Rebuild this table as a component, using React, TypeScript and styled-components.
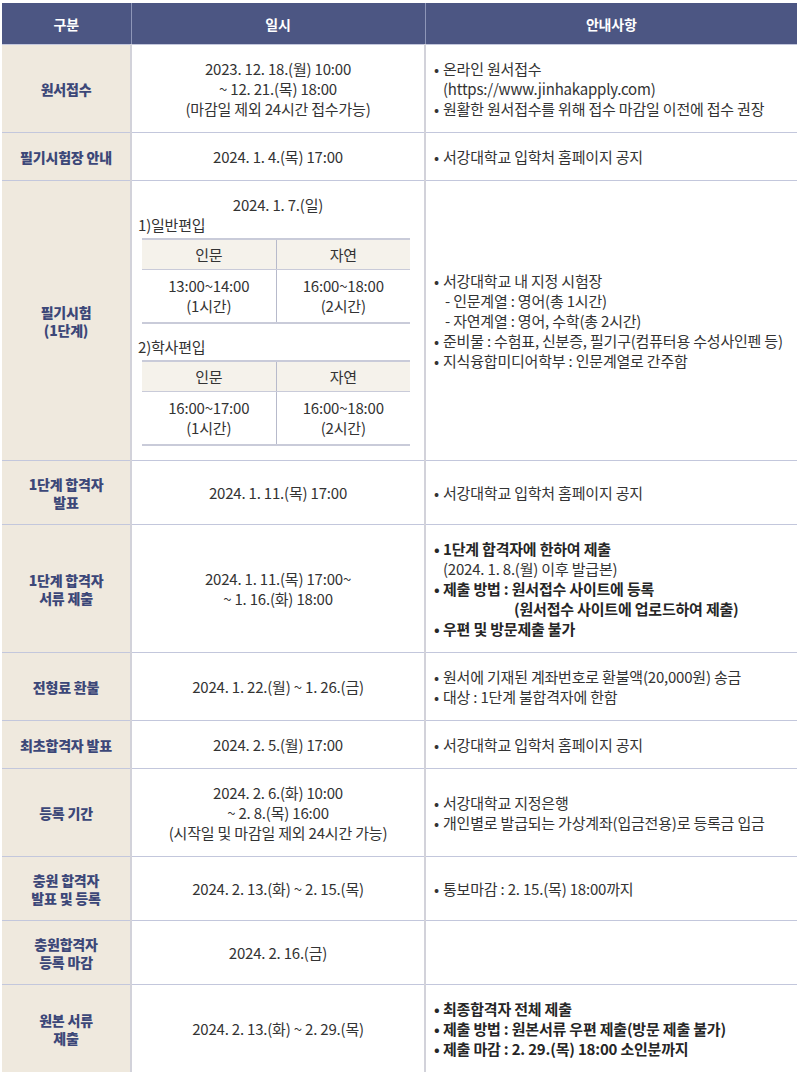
import React from 'react';
import styled, { createGlobalStyle } from 'styled-components';

const GlobalStyle = createGlobalStyle`
  body {
    margin: 3px 3px 0 2px;
    background: #fff;
    font-family: 'Noto Sans CJK KR', 'Noto Sans', sans-serif;
    color: #333;
  }
`;

const Table = styled.table`
  width: 795px;
  border-collapse: collapse;
  table-layout: fixed;
  font-size: 15px;
  line-height: 20px;
  letter-spacing: -0.2px;
  border-bottom: 2px solid #c3c7dc;
`;

const Th = styled.th`
  background: #4c5683;
  color: #fff;
  font-size: 14px;
  font-weight: 700;
  padding: 10.5px 0;
  text-align: center;
  border-left: 1px solid #8e96b8;
  &:first-child {
    border-left: none;
  }
`;

const Row = styled.tr`
  border-top: 1px solid #c3c7dc;
`;

const Label = styled.td`
  background: #efe9de;
  color: #3c4778;
  font-size: 14px;
  font-weight: 900;
  text-align: center;
  line-height: 18px;
  padding: 13.5px 4px;
  border-right: 2px solid #d2d2da;
`;

const DateCell = styled.td`
  text-align: center;
  padding: 13.5px 6px;
  border-right: 2px solid #d2d2da;
  vertical-align: middle;
`;

const NoteCell = styled.td`
  padding: 13.5px 6px 13.5px 8px;
  vertical-align: middle;
`;

const Line = styled.div<{ $bold?: boolean; $indent?: number }>`
  display: flex;
  font-weight: ${(p) => (p.$bold ? 700 : 400)};
  color: ${(p) => (p.$bold ? '#262626' : '#333')};
  padding-left: ${(p) => p.$indent ?? 0}px;
  white-space: nowrap;
`;

const Dot = styled.span`
  width: 9px;
  flex: none;
`;

const Exam = styled.div`
  padding: 0 4px 1px 0;
`;

const ExamDate = styled.div`
  text-align: center;
  padding-left: 4px;
`;

const SubTitle = styled.div<{ $gap?: number }>`
  text-align: left;
  margin-top: ${(p) => p.$gap ?? 0}px;
`;

const SubTable = styled.table`
  width: 268px;
  margin: 3px 0 0 4px;
  border-collapse: collapse;
  table-layout: fixed;
  border-top: 2px solid #c9cbd9;
  border-bottom: 2px solid #c9cbd9;
`;

const SubTh = styled.th`
  background: #f5f2eb;
  font-weight: 400;
  color: #333;
  padding: 5px 0 4px;
  border-bottom: 1px solid #c9cbd9;
  & + & {
    border-left: 1px solid #b7bacb;
  }
`;

const SubTd = styled.td`
  padding: 6px 0 6px;
  text-align: center;
  & + & {
    border-left: 1px solid #b7bacb;
  }
`;

type NoteLine = { text: string; bullet?: boolean; bold?: boolean; indent?: number };

interface RowData {
  label: string[];
  date: React.ReactNode;
  notes: NoteLine[];
}

const b = (text: string, bold = false): NoteLine => ({ text, bullet: true, bold });
const c = (text: string, indent = 9, bold = false): NoteLine => ({ text, indent, bold });

function Notes({ lines }: { lines: NoteLine[] }) {
  return (
    <>
      {lines.map((l, i) => (
        <Line key={i} $bold={l.bold} $indent={l.indent}>
          {l.bullet && <Dot>•</Dot>}
          <span>{l.text}</span>
        </Line>
      ))}
    </>
  );
}

function ExamTable({ left, right }: { left: string[]; right: string[] }) {
  return (
    <SubTable>
      <thead>
        <tr>
          <SubTh>인문</SubTh>
          <SubTh>자연</SubTh>
        </tr>
      </thead>
      <tbody>
        <tr>
          <SubTd>
            {left[0]}
            <br />
            {left[1]}
          </SubTd>
          <SubTd>
            {right[0]}
            <br />
            {right[1]}
          </SubTd>
        </tr>
      </tbody>
    </SubTable>
  );
}

const lines = (...t: string[]) =>
  t.map((s, i) => (
    <React.Fragment key={i}>
      {i > 0 && <br />}
      {s}
    </React.Fragment>
  ));

const rows: RowData[] = [
  {
    label: ['원서접수'],
    date: lines('2023. 12. 18.(월) 10:00', '~ 12. 21.(목) 18:00', '(마감일 제외 24시간 접수가능)'),
    notes: [
      b('온라인 원서접수'),
      c('(https://www.jinhakapply.com)'),
      b('원활한 원서접수를 위해 접수 마감일 이전에 접수 권장'),
    ],
  },
  {
    label: ['필기시험장 안내'],
    date: '2024. 1. 4.(목) 17:00',
    notes: [b('서강대학교 입학처 홈페이지 공지')],
  },
  {
    label: ['필기시험', '(1단계)'],
    date: (
      <Exam>
        <ExamDate>2024. 1. 7.(일)</ExamDate>
        <SubTitle>1)일반편입</SubTitle>
        <ExamTable left={['13:00~14:00', '(1시간)']} right={['16:00~18:00', '(2시간)']} />
        <SubTitle $gap={13}>2)학사편입</SubTitle>
        <ExamTable left={['16:00~17:00', '(1시간)']} right={['16:00~18:00', '(2시간)']} />
      </Exam>
    ),
    notes: [
      b('서강대학교 내 지정 시험장'),
      c('- 인문계열 : 영어(총 1시간)', 11),
      c('- 자연계열 : 영어, 수학(총 2시간)', 11),
      b('준비물 : 수험표, 신분증, 필기구(컴퓨터용 수성사인펜 등)'),
      b('지식융합미디어학부 : 인문계열로 간주함'),
    ],
  },
  {
    label: ['1단계 합격자', '발표'],
    date: '2024. 1. 11.(목) 17:00',
    notes: [b('서강대학교 입학처 홈페이지 공지')],
  },
  {
    label: ['1단계 합격자', '서류 제출'],
    date: lines('2024. 1. 11.(목) 17:00~', '~ 1. 16.(화) 18:00'),
    notes: [
      b('1단계 합격자에 한하여 제출', true),
      c('(2024. 1. 8.(월) 이후 발급본)'),
      b('제출 방법 : 원서접수 사이트에 등록', true),
      c('(원서접수 사이트에 업로드하여 제출)', 80, true),
      b('우편 및 방문제출 불가', true),
    ],
  },
  {
    label: ['전형료 환불'],
    date: '2024. 1. 22.(월) ~ 1. 26.(금)',
    notes: [b('원서에 기재된 계좌번호로 환불액(20,000원) 송금'), b('대상 : 1단계 불합격자에 한함')],
  },
  {
    label: ['최초합격자 발표'],
    date: '2024. 2. 5.(월) 17:00',
    notes: [b('서강대학교 입학처 홈페이지 공지')],
  },
  {
    label: ['등록 기간'],
    date: lines('2024. 2. 6.(화) 10:00', '~ 2. 8.(목) 16:00', '(시작일 및 마감일 제외 24시간 가능)'),
    notes: [b('서강대학교 지정은행'), b('개인별로 발급되는 가상계좌(입금전용)로 등록금 입금')],
  },
  {
    label: ['충원 합격자', '발표 및 등록'],
    date: '2024. 2. 13.(화) ~ 2. 15.(목)',
    notes: [b('통보마감 : 2. 15.(목) 18:00까지')],
  },
  {
    label: ['충원합격자', '등록 마감'],
    date: '2024. 2. 16.(금)',
    notes: [],
  },
  {
    label: ['원본 서류', '제출'],
    date: '2024. 2. 13.(화) ~ 2. 29.(목)',
    notes: [
      b('최종합격자 전체 제출', true),
      b('제출 방법 : 원본서류 우편 제출(방문 제출 불가)', true),
      b('제출 마감 : 2. 29.(목) 18:00 소인분까지', true),
    ],
  },
];

export default function App() {
  return (
    <>
      <GlobalStyle />
      <Table>
        <colgroup>
          <col style={{ width: 129 }} />
          <col style={{ width: 294 }} />
          <col />
        </colgroup>
        <thead>
          <tr>
            <Th>구분</Th>
            <Th>일시</Th>
            <Th>안내사항</Th>
          </tr>
        </thead>
        <tbody>
          {rows.map((r, i) => (
            <Row key={i}>
              <Label>{lines(...r.label)}</Label>
              <DateCell>{r.date}</DateCell>
              <NoteCell>
                <Notes lines={r.notes} />
              </NoteCell>
            </Row>
          ))}
        </tbody>
      </Table>
    </>
  );
}
